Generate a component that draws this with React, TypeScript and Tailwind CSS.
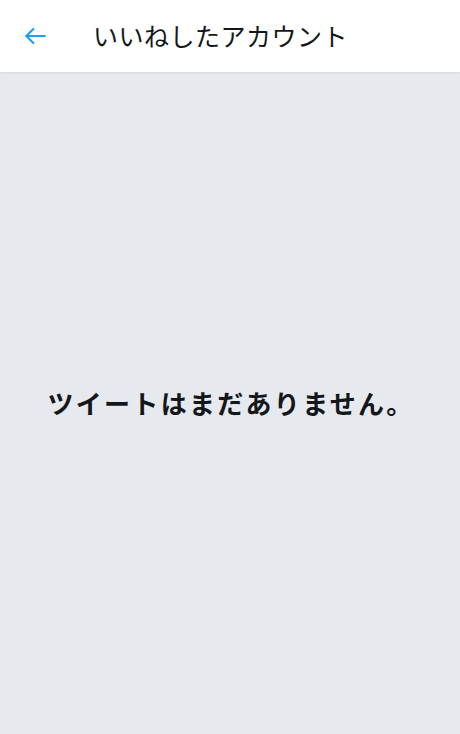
import React from "react";

export default function App() {
  const font = { fontFamily: '"Noto Sans CJK JP", "Noto Sans", sans-serif' };
  return (
    <div className="w-[460px] h-[734px] flex flex-col bg-[#e6e9ee]" style={font}>
      <div className="h-[72px] bg-white flex items-center shadow-[0_1px_2px_rgba(0,0,0,0.08)] z-10 shrink-0">
        <div className="w-[93px] pl-[22px] flex items-center">
          <svg width="26" height="26" viewBox="0 0 24 24" fill="none" stroke="#1da1f2" strokeWidth="2" strokeLinecap="round" strokeLinejoin="round">
            <path d="M21 12H4" />
            <path d="M10.5 5.5L4 12l6.5 6.5" />
          </svg>
        </div>
        <div className="text-[25px] leading-none text-[#14171a] tracking-[0.5px] -mt-[2px]">いいねしたアカウント</div>
      </div>
      <div className="flex-1 flex items-center justify-center">
        <div className="text-[26px] font-bold text-[#14171a] leading-none tracking-[2.3px] pl-[2px]">ツイートはまだありません。</div>
      </div>
    </div>
  );
}
